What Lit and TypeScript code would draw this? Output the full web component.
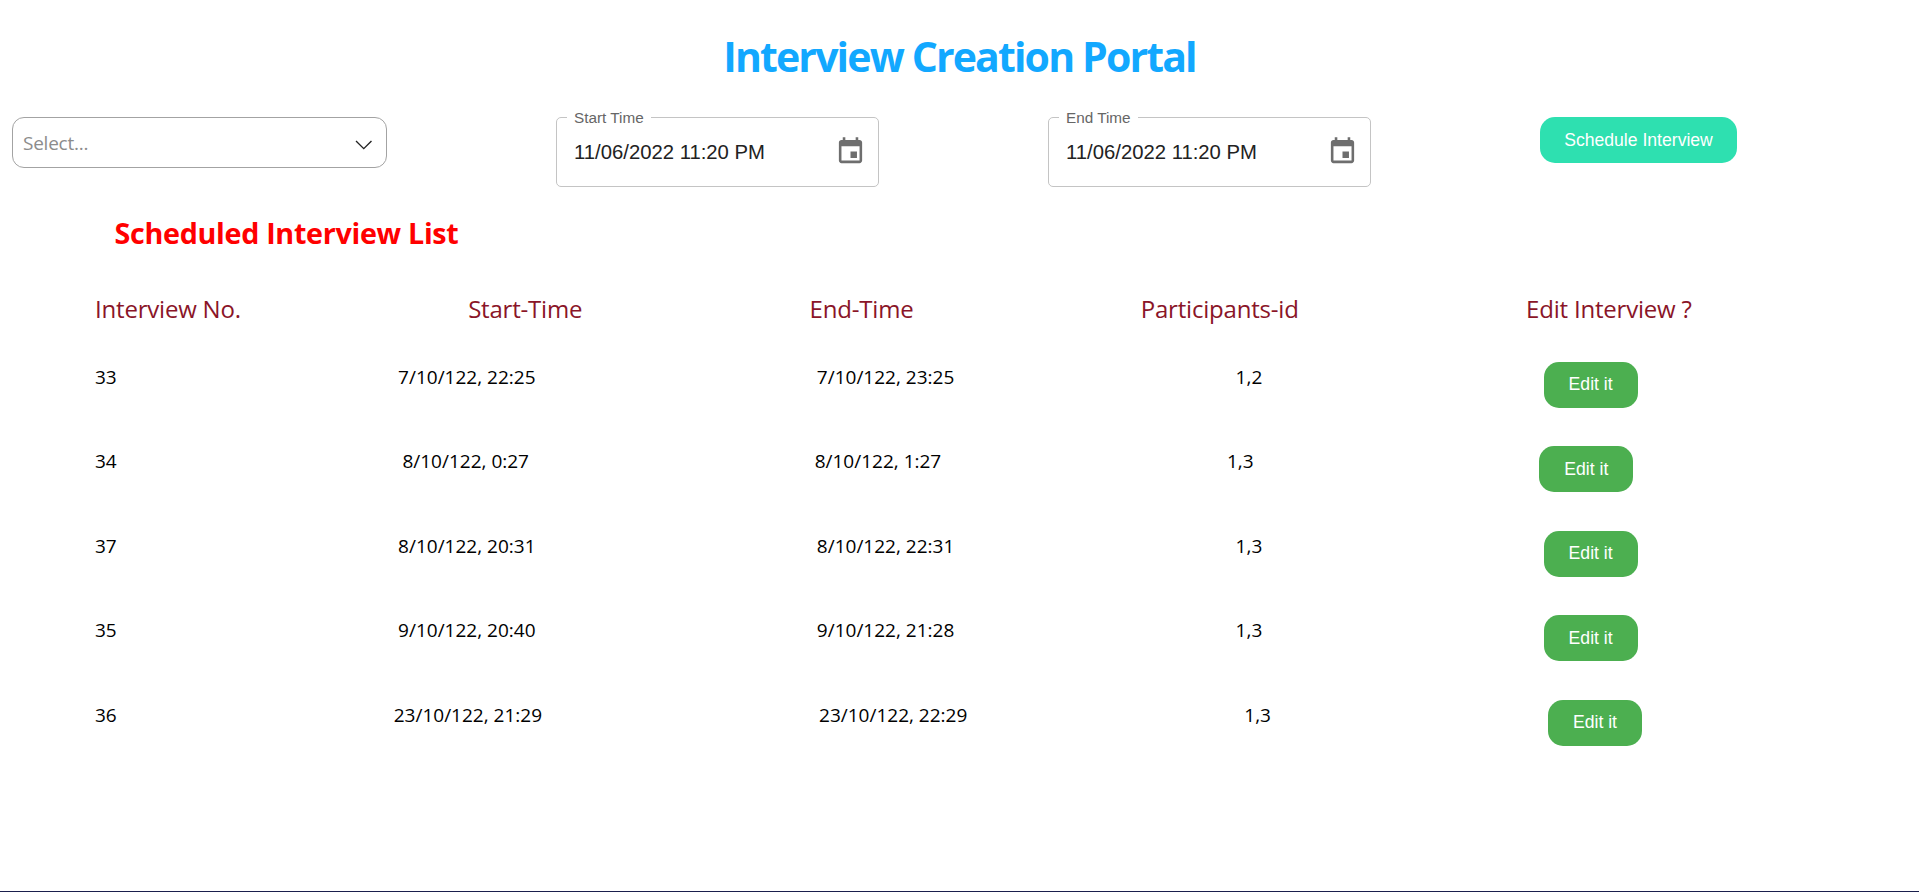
import { LitElement, html, css } from "lit";
import { customElement } from "lit/decorators.js";

const rows = [
  ["33", "7/10/122, 22:25", "7/10/122, 23:25", "1,2"],
  ["34", "8/10/122, 0:27", "8/10/122, 1:27", "1,3"],
  ["37", "8/10/122, 20:31", "8/10/122, 22:31", "1,3"],
  ["35", "9/10/122, 20:40", "9/10/122, 21:28", "1,3"],
  ["36", "23/10/122, 21:29", "23/10/122, 22:29", "1,3"],
];
const heads = ["Interview No.", "Start-Time", "End-Time", "Participants-id", "Edit Interview ?"];
const eventIcon = html`<svg class="cal" viewBox="0 0 24 24"><path d="M17 12h-5v5h5v-5zM16 1v2H8V1H6v2H5c-1.11 0-1.99.9-1.99 2L3 19c0 1.1.89 2 2 2h14c1.1 0 2-.9 2-2V5c0-1.1-.9-2-2-2h-1V1h-2zm3 18H5V8h14v11z"/></svg>`;

@customElement("app-root")
export class AppRoot extends LitElement {
  static styles = css`
    :host { display: flex; flex-direction: column; min-height: 892px; background: #fff; font-family: "Open Sans", sans-serif; color: #000; box-sizing: border-box; border-bottom: 1px solid #1a1f4d; }
    h1 { margin: 0; padding-top: 28px; height: 117px; box-sizing: border-box; text-align: center; font-size: 41px; line-height: 56px; font-weight: 700; color: #12a8ff; letter-spacing: -1.85px; }
    .controls { display: flex; align-items: flex-start; gap: 169px; padding-left: 12px; }
    .select { width: 375px; height: 51px; box-sizing: border-box; border: 1px solid #a3a3a3; border-radius: 12px; display: flex; align-items: center; justify-content: space-between; padding: 1px 14px 0 10px; color: #8c8c8c; font-size: 19px; letter-spacing: -0.25px; }
    .chev { width: 17.5px; height: 10px; fill: none; stroke: #222; stroke-width: 1.5; margin-top: 3px; }
    .field { position: relative; width: 323px; height: 70px; box-sizing: border-box; border: 1px solid #c4c4c4; border-radius: 5px; display: flex; align-items: flex-start; justify-content: space-between; padding: 18px 12px 0 17px; font-family: "Liberation Sans", Arial, sans-serif; font-size: 20.3px; color: #222; }
    .field span.val { line-height: 32px; }
    .field label { position: absolute; left: 10px; top: -9px; background: #fff; padding: 0 7px; font-size: 15.3px; line-height: 18px; color: #666; }
    .cal { width: 31px; height: 31px; fill: #6e6e6e; }
    .sched, .edit { border: 0; color: #fff; font-family: "Liberation Sans", Arial, sans-serif; font-size: 17.6px; height: 46px; border-radius: 15px; padding: 0 25px; white-space: nowrap; }
    .sched { background: #2ee0b0; width: 197px; padding: 0; }
    h2 { margin: 0; padding: 27px 0 0 114.5px; height: 105px; box-sizing: border-box; font-size: 28.7px; line-height: 38px; font-weight: 700; color: #ff0000; letter-spacing: -0.3px; }
    .row { display: flex; justify-content: space-between; align-items: flex-start; padding-left: 95px; }
    .heads { height: 69.5px; font-size: 24px; line-height: 33px; color: #8a1528; letter-spacing: -0.2px; }
    .item { font-size: 19px; line-height: 26px; padding-top: 2px; white-space: nowrap; }
    .rows { display: flex; flex-direction: column; gap: 38.5px; }
    .edit { background: #4caf50; }
    .spacer { flex: 1; }
  `;
  render() {
    return html`
      <h1>Interview Creation Portal</h1>
      <div class="controls">
        <div class="select"><span>Select...</span><svg class="chev" viewBox="0 0 19 11"><path d="M1 1l8.5 8.5L18 1"/></svg></div>
        <div class="field"><label>Start Time</label><span class="val">11/06/2022 11:20 PM</span>${eventIcon}</div>
        <div class="field"><label>End Time</label><span class="val">11/06/2022 11:20 PM</span>${eventIcon}</div>
        <button class="sched">Schedule Interview</button>
      </div>
      <h2>Scheduled Interview List</h2>
      <div class="row heads">${heads.map((h) => html`<div>${h}</div>`)}<div></div></div>
      <div class="rows">
        ${rows.map((r) => html`<div class="row">${r.map((c) => html`<div class="item">${c}</div>`)}<button class="edit">Edit it</button><div></div></div>`)}
      </div>
      <div class="spacer"></div>
    `;
  }
}
